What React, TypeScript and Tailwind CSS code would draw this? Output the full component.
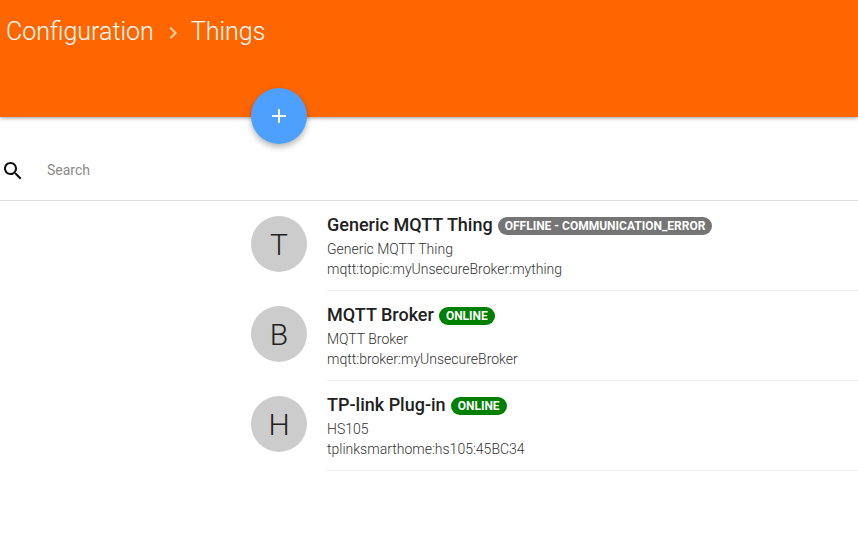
interface ThingRowProps {
  letter: string
  name: string
  status: string
  online: boolean
  label: string
  uid: string
}

function ThingRow({ letter, name, status, online, label, uid }: ThingRowProps) {
  return (
    <div className="flex h-[90px]">
      <div className="w-[251px] shrink-0" />
      <div className="w-[76px] shrink-0 pt-[15px]">
        <div className="flex h-14 w-14 items-center justify-center rounded-full bg-[#cccccc] text-[30px] font-light text-[#222]">
          {letter}
        </div>
      </div>
      <div className="flex-1 border-b border-[#eeeeee] pt-[12px]">
        <div className="flex h-[24px] items-center">
          <span className="text-[18px] leading-[24px] font-medium text-[#212121]">{name}</span>
          <span
            className={`mt-[2px] ml-[5px] rounded-full px-[7px] text-[12px] leading-[18px] font-bold text-white ${online ? 'bg-[#008000]' : 'bg-[#757575]'}`}
          >
            {status}
          </span>
        </div>
        <div className="mt-[2px] text-[14px] leading-[20px] font-light text-[#333]">{label}</div>
        <div className="text-[14px] leading-[20px] font-light text-[#333]">{uid}</div>
      </div>
    </div>
  )
}

export default function App() {
  return (
    <div className="relative h-[556px] w-[858px] overflow-hidden bg-white font-['Roboto',sans-serif]">
      <div className="flex h-[117px] items-start bg-[#ff6600] pt-[14px] pl-[6px] text-[25px] leading-[35px] font-light text-white shadow-[0_1px_4px_rgba(0,0,0,0.4)]">
        <span>Configuration</span>
        <svg viewBox="0 0 24 24" className="mt-[7px] mr-[6px] ml-[7px] h-6 w-6 fill-white/70">
          <path d="M10 6L8.59 7.41 13.17 12l-4.58 4.59L10 18l6-6z" />
        </svg>
        <span>Things</span>
      </div>
      <button className="absolute top-[88px] left-[251px] flex h-14 w-14 items-center justify-center rounded-full bg-[#4da0ff] shadow-[0_3px_6px_rgba(0,0,0,0.3)]">
        <svg viewBox="0 0 24 24" className="h-6 w-6 fill-white">
          <path d="M19 13h-6v6h-2v-6H5v-2h6V5h2v6h6v2z" />
        </svg>
      </button>
      <div className="flex h-[84px] items-center border-b border-[#dddddd] pt-[24px] pl-[1px]">
        <svg viewBox="0 0 24 24" className="h-6 w-6 fill-[#111]">
          <path d="M15.5 14h-.79l-.28-.27C15.41 12.59 16 11.11 16 9.5 16 5.91 13.09 3 9.5 3S3 5.91 3 9.5 5.91 16 9.5 16c1.61 0 3.09-.59 4.23-1.57l.27.28v.79l5 4.99L20.49 19l-4.99-5zm-6 0C7.01 14 5 11.99 5 9.5S7.01 5 9.5 5 14 7.01 14 9.5 11.99 14 9.5 14z" />
        </svg>
        <span className="ml-[22px] text-[14px] text-[#8a8a8a]">Search</span>
      </div>
      <ThingRow
        letter="T"
        name="Generic MQTT Thing"
        status="OFFLINE - COMMUNICATION_ERROR"
        online={false}
        label="Generic MQTT Thing"
        uid="mqtt:topic:myUnsecureBroker:mything"
      />
      <ThingRow
        letter="B"
        name="MQTT Broker"
        status="ONLINE"
        online
        label="MQTT Broker"
        uid="mqtt:broker:myUnsecureBroker"
      />
      <ThingRow
        letter="H"
        name="TP-link Plug-in"
        status="ONLINE"
        online
        label="HS105"
        uid="tplinksmarthome:hs105:45BC34"
      />
    </div>
  )
}
